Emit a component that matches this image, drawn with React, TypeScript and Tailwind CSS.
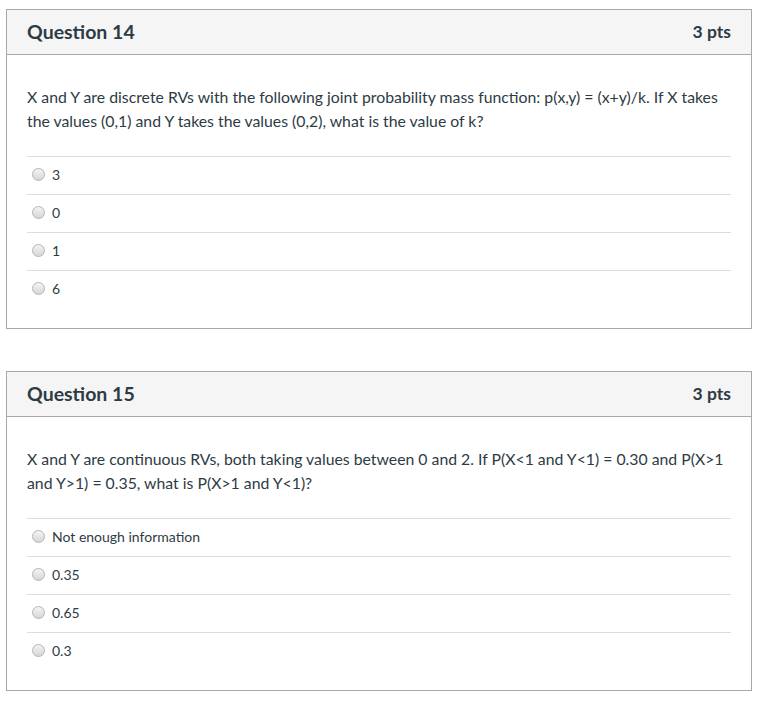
import React, { FC } from "react";

type Question = {
	title: string;
	points: string;
	text: string;
	answers: string[];
};

const questions: Question[] = [
	{
		title: "Question 14",
		points: "3 pts",
		text: "X and Y are discrete RVs with the following joint probability mass function: p(x,y) = (x+y)/k. If X takes the values (0,1) and Y takes the values (0,2), what is the value of k?",
		answers: ["3", "0", "1", "6"],
	},
	{
		title: "Question 15",
		points: "3 pts",
		text: "X and Y are continuous RVs, both taking values between 0 and 2. If P(X<1 and Y<1) = 0.30 and P(X>1 and Y>1) = 0.35, what is P(X>1 and Y<1)?",
		answers: ["Not enough information", "0.35", "0.65", "0.3"],
	},
];

const Radio: FC = () => (
	<span className="inline-block w-[13px] h-[13px] rounded-full border border-[#b5b5b5] bg-linear-to-b from-[#f4f4f4] to-[#d6d6d6] shrink-0" />
);

const QuestionCard: FC<{ q: Question }> = ({ q }) => {
	return (
		<div className="border border-[#a8a8a8] bg-white">
			{/* Header */}
			<div className="h-[45px] bg-[#f5f5f5] border-b border-[#a8a8a8] flex items-center justify-between px-5">
				<h2 className="text-[19.5px] font-bold text-[#2d3b45]">{q.title}</h2>
				<span className="text-[17.5px] font-bold text-[#2d3b45]">{q.points}</span>
			</div>

			{/* Body */}
			<div className="px-5 pt-[30px] pb-[20px]">
				<p className="text-[15.8px] leading-[24px] text-[#2d3b45]">{q.text}</p>
				<div className="mt-[23px]">
					{q.answers.map((a, idx) => (
						<div key={idx} className="h-[38px] border-t border-[#dddddd] flex items-center pl-[5px] pb-[3px] gap-[7px]">
							<Radio />
							<span className="text-[14px] text-[#2d3b45]">{a}</span>
						</div>
					))}
				</div>
			</div>
		</div>
	);
};

export default function App() {
	return (
		<div className="w-[770px] min-h-[705px] bg-white pt-[9px] pl-[6px] pr-[18px]" style={{ fontFamily: "Lato, 'Liberation Sans', sans-serif" }}>
			<div className="flex flex-col gap-[42px]">
				{questions.map((q, idx) => (
					<QuestionCard key={idx} q={q} />
				))}
			</div>
		</div>
	);
}
